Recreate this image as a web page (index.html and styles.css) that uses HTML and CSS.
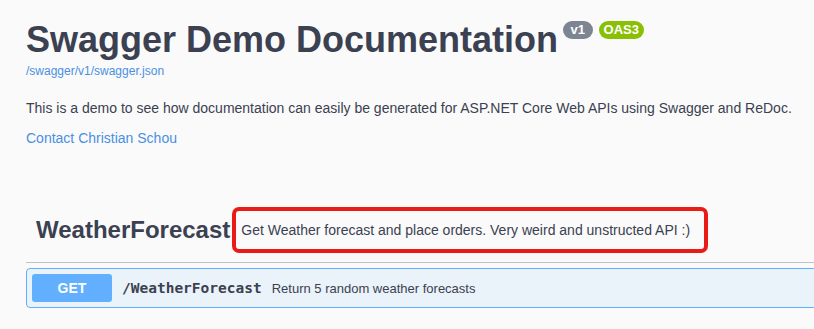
FILE: index.html
```html
<!DOCTYPE html>
<html lang="en">
<head>
<meta charset="utf-8">
<title>Swagger Demo Documentation</title>
<link rel="stylesheet" href="styles.css">
</head>
<body>
<div class="wrapper">
  <section class="info">
    <div class="title-row">
      <h2 class="title">Swagger Demo Documentation</h2>
      <span class="badge badge-version">v1</span>
      <span class="badge badge-oas">OAS3</span>
    </div>
    <a class="url" href="#">/swagger/v1/swagger.json</a>
    <p class="description">This is a demo to see how documentation can easily be generated for ASP.NET Core Web APIs using Swagger and ReDoc.</p>
    <a class="contact" href="#">Contact Christian Schou</a>
  </section>

  <section class="tag-section">
    <div class="tag-row">
      <h4 class="tag-name">WeatherForecast</h4>
      <div class="tag-desc">Get Weather forecast and place orders. Very weird and unstructed API :)</div>
    </div>
    <div class="opblock">
      <span class="method">GET</span>
      <span class="path">/WeatherForecast</span>
      <span class="summary">Return 5 random weather forecasts</span>
    </div>
  </section>
</div>
</body>
</html>
```

FILE: styles.css
```css
html, body {
  margin: 0;
  padding: 0;
  background: #fafafa;
  overflow: hidden;
}

body {
  font-family: "Liberation Sans", Arial, sans-serif;
  color: #3b4151;
}

.wrapper {
  width: 1200px;
  padding: 20px 0 0 26px;
  box-sizing: border-box;
}

.info {
  display: flex;
  flex-direction: column;
  align-items: flex-start;
}

.title-row {
  display: flex;
  align-items: flex-start;
  height: 40px;
}

.title {
  margin: 0;
  font-size: 36px;
  line-height: 40px;
  font-weight: 700;
  color: #3b4151;
}

.badge {
  margin-top: 1px;
  font-size: 13px;
  line-height: 14px;
  font-weight: 700;
  color: #fff;
  border-radius: 57px;
  padding: 2px 5px;
}

.badge-version {
  margin-left: 5px;
  padding: 2px 7.5px;
  background: #7d8492;
}

.badge-oas {
  margin-left: 6px;
  background: #89bf04;
}

.url {
  margin-top: 4px;
  font-size: 12px;
  line-height: 14px;
  color: #4990e2;
  text-decoration: none;
}

.description {
  margin: 20px 0 0;
  font-size: 14px;
  line-height: 20px;
}

.contact {
  margin-top: 10px;
  font-size: 14px;
  line-height: 20px;
  color: #4990e2;
  text-decoration: none;
}

.tag-section {
  margin-top: 59px;
}

.tag-row {
  display: flex;
  align-items: center;
  padding: 0 0 9px 10px;
  border-bottom: 1px solid rgba(59, 65, 81, 0.3);
}

.tag-name {
  margin: 0;
  font-size: 24px;
  line-height: 30px;
  font-weight: 700;
}

.tag-desc {
  margin-left: 2px;
  height: 38px;
  display: flex;
  align-items: center;
  padding: 0 14px 0 5px;
  border: 4px solid #e81b17;
  border-radius: 7px;
  font-size: 14px;
  background: #fafafa;
}

.opblock {
  margin-top: 5px;
  display: flex;
  align-items: center;
  padding: 5px;
  border: 1px solid #61affe;
  border-radius: 4px;
  background: rgba(97, 175, 254, 0.1);
}

.method {
  width: 80px;
  padding: 6px 0;
  line-height: 16px;
  text-align: center;
  font-size: 14px;
  font-weight: 700;
  color: #fff;
  background: #61affe;
  border-radius: 3px;
}

.path {
  margin-left: 10px;
  font-family: "DejaVu Sans Mono", "Liberation Mono", monospace;
  font-size: 14.5px;
  font-weight: 700;
  color: #3b4151;
}

.summary {
  margin-left: 10px;
  font-size: 13px;
  color: #3b4151;
}
```
